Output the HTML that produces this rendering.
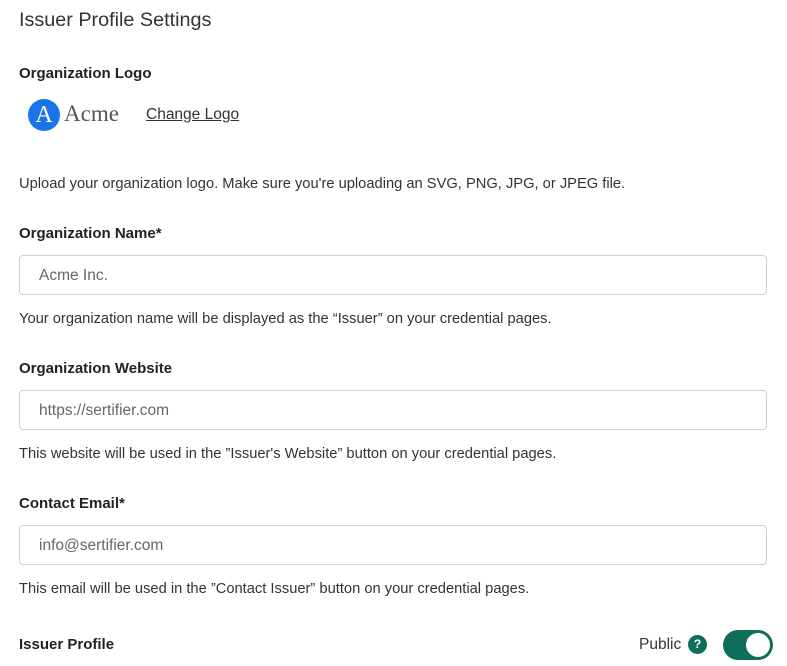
<!DOCTYPE html>
<html><head><style>
body{margin:0;background:#fff;font-family:"Liberation Sans",sans-serif;color:#222;width:787px;height:666px;overflow:hidden;position:relative}
.a{position:absolute;white-space:nowrap}
h1{position:absolute;left:19px;top:9px;margin:0;font-weight:400;font-size:19.8px;color:#333}
.l{font-weight:700;font-size:15px;color:#222}
.t{font-size:14.7px;color:#333}
.in{position:absolute;left:19px;width:746px;height:38px;border:1px solid #cfcfcf;border-radius:4px}
.in span{position:absolute;left:19px;top:11px;font-size:15.5px;color:#666}
</style></head><body>
<h1>Issuer Profile Settings</h1>
<div class="a l" style="left:19px;top:65px">Organization Logo</div>
<div class="a" style="left:28px;top:99px;width:32px;height:32px;border-radius:50%;background:#1a73e8;color:#fff;font-family:'Liberation Serif',serif;font-size:24px;text-align:center;line-height:32px">A</div>
<div class="a" style="left:64px;top:101px;font-family:'Liberation Serif',serif;font-size:23px;color:#555">Acme</div>
<div class="a" style="left:146px;top:106px;font-size:15.5px;color:#333;text-decoration:underline">Change Logo</div>
<div class="a t" style="left:19px;top:176px">Upload your organization logo. Make sure you're uploading an SVG, PNG, JPG, or JPEG file.</div>
<div class="a l" style="left:19px;top:225px">Organization Name*</div>
<div class="in" style="top:255px"><span>Acme Inc.</span></div>
<div class="a t" style="left:19px;top:311px">Your organization name will be displayed as the “Issuer” on your credential pages.</div>
<div class="a l" style="left:19px;top:360px">Organization Website</div>
<div class="in" style="top:390px"><span>https://sertifier.com</span></div>
<div class="a t" style="left:19px;top:446px">This website will be used in the ”Issuer's Website” button on your credential pages.</div>
<div class="a l" style="left:19px;top:495px">Contact Email*</div>
<div class="in" style="top:525px"><span>info@sertifier.com</span></div>
<div class="a t" style="left:19px;top:581px">This email will be used in the ”Contact Issuer” button on your credential pages.</div>
<div class="a l" style="left:19px;top:636px">Issuer Profile</div>
<div class="a" style="left:639px;top:636px;font-size:15.5px;color:#333">Public</div>
<div class="a" style="left:688px;top:635px;width:19px;height:19px;border-radius:50%;background:#0e6e5a;color:#fff;font-weight:700;font-size:12px;text-align:center;line-height:19px">?</div>
<div class="a" style="left:723px;top:630px;width:50px;height:30px;border-radius:15px;background:#0e6e5a"><div style="position:absolute;right:3px;top:3px;width:24px;height:24px;border-radius:50%;background:#fff"></div></div>
</body></html>
